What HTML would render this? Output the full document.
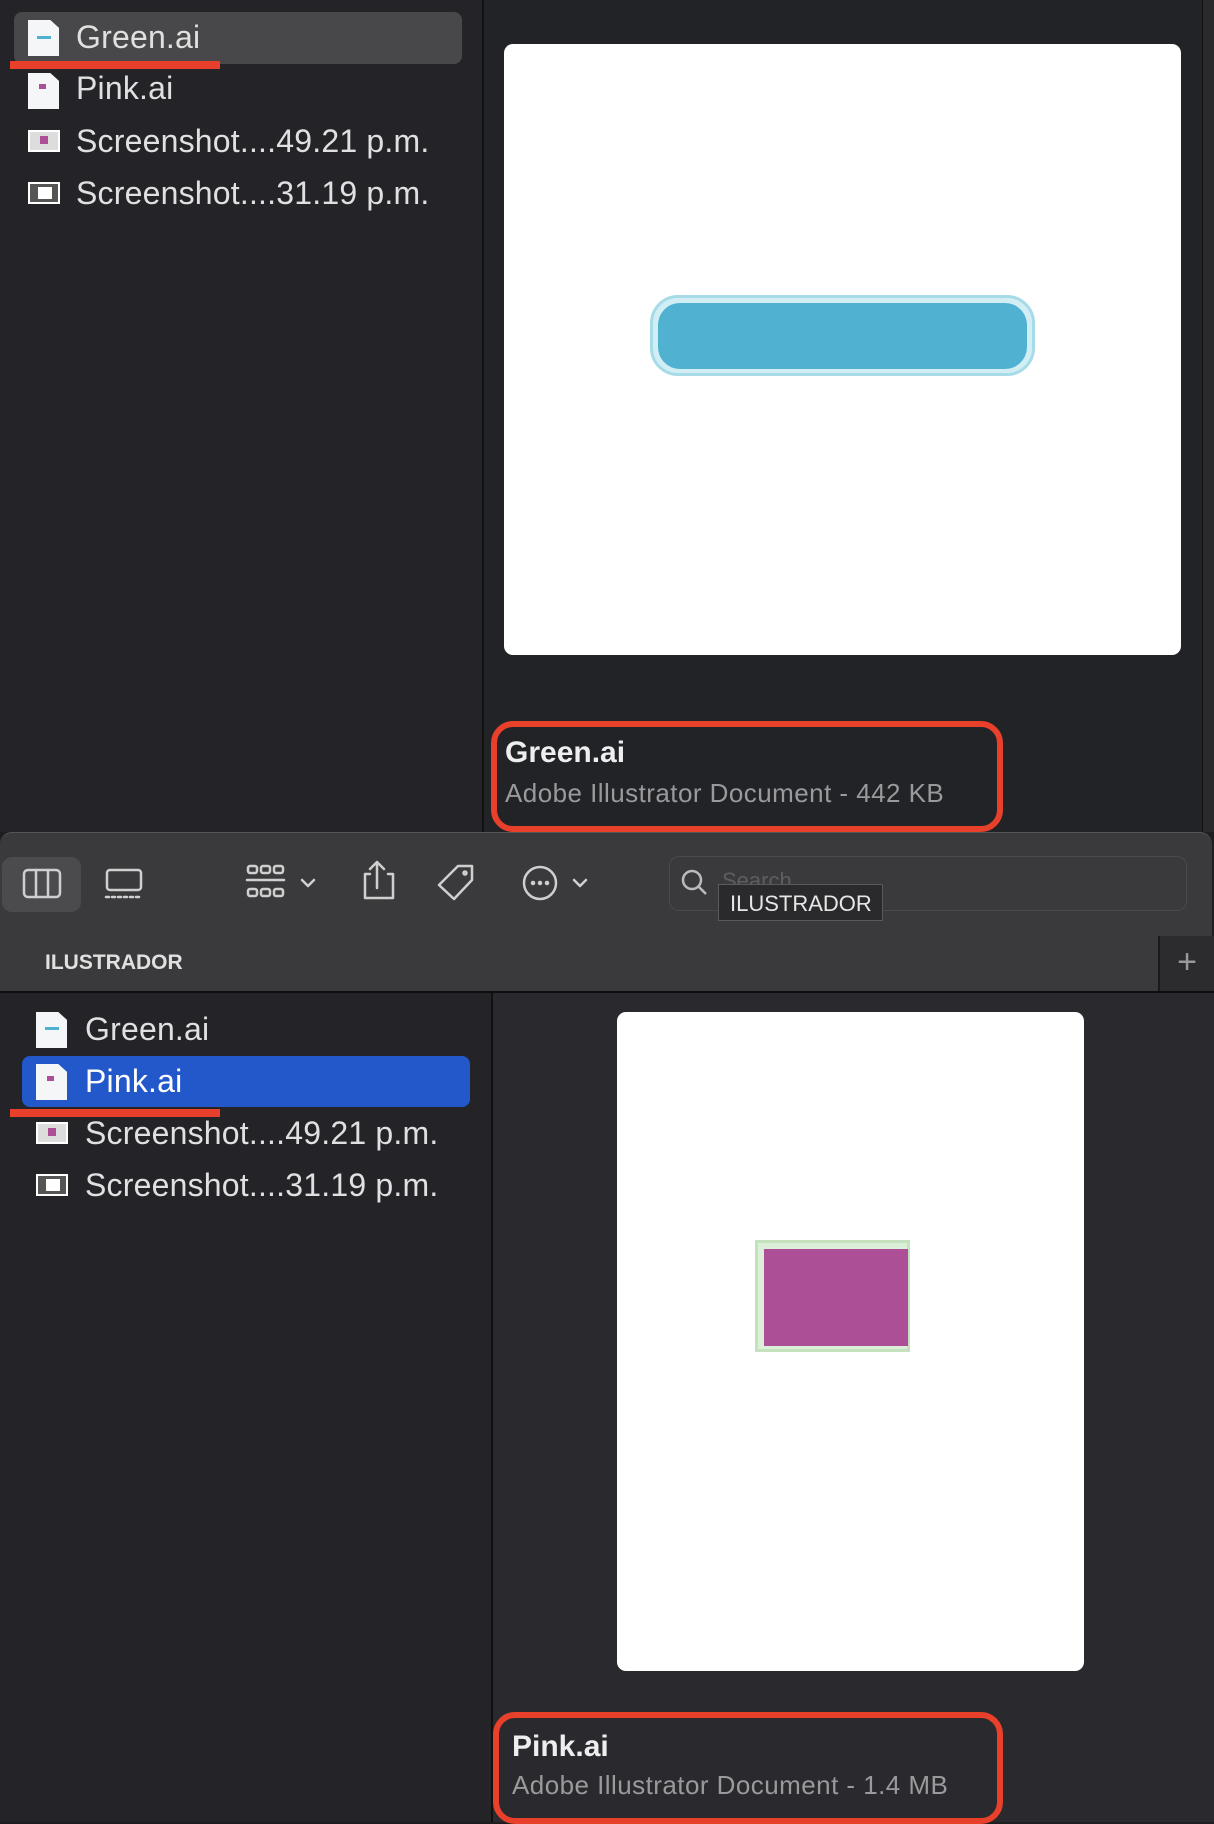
<!DOCTYPE html>
<html><head><meta charset="utf-8"><style>
*{margin:0;padding:0;box-sizing:border-box}
body{width:1214px;height:1822px;background:#1e1e20;font-family:"Liberation Sans",sans-serif;position:relative;overflow:hidden;color:#e2e2e2}
.abs{position:absolute}
.row{position:absolute;height:50px;display:flex;align-items:center;font-size:32px;color:#e0e0e0;white-space:nowrap;letter-spacing:0.2px}
.fi{position:absolute;width:31px;height:36px;background:#f4f6f8;clip-path:polygon(0 0,72% 0,100% 22%,100% 100%,0 100%)}
.ss{position:absolute;width:32px;height:22px;background:#fff;border:2px solid #fff}
.red{position:absolute;border:6px solid #e8402a;border-radius:22px}
.t{font-size:30px;font-weight:bold;color:#eee}
.s{font-size:26px;color:#9a9a9c;letter-spacing:0.45px}
</style></head><body>
<div class="abs" style="left:0;top:0;width:482px;height:832px;background:#232328"></div>
<div class="abs" style="left:482px;top:0;width:2px;height:832px;background:#111"></div>
<div class="abs" style="left:484px;top:0;width:718px;height:832px;background:#222327"></div>
<div class="abs" style="left:1202px;top:0;width:12px;height:832px;background:#2a2a2c;border-left:1px solid #111"></div>
<div class="abs" style="left:14px;top:12px;width:448px;height:52px;background:#48484a;border-radius:8px"></div>
<div class="abs" style="left:10px;top:61px;width:210px;height:8px;background:#e8402a"></div>
<div class="fi" style="left:28px;top:20px"></div><div class="abs" style="left:37px;top:36px;width:14px;height:3px;background:#4fb1d1"></div>
<div class="fi" style="left:28px;top:73px"></div><div class="abs" style="left:39px;top:84px;width:7px;height:5px;background:#ad4f96"></div>
<div class="ss" style="left:28px;top:130px;background:#ddd"><div class="abs" style="left:10px;top:4px;width:8px;height:8px;background:#ad4f96"></div></div>
<div class="ss" style="left:28px;top:182px;background:#555"><div class="abs" style="left:8px;top:3px;width:14px;height:12px;background:#fff"></div></div>
<div class="row" style="left:76px;top:12px">Green.ai</div>
<div class="row" style="left:76px;top:63px">Pink.ai</div>
<div class="row" style="left:76px;top:116px">Screenshot....49.21 p.m.</div>
<div class="row" style="left:76px;top:168px">Screenshot....31.19 p.m.</div>
<div class="abs" style="left:504px;top:44px;width:677px;height:611px;background:#fff;border-radius:9px"></div>
<div class="abs" style="left:650px;top:295px;width:385px;height:81px;background:#d2eef5;border-radius:28px;border:3px solid #a7dbe8"></div>
<div class="abs" style="left:658px;top:303px;width:369px;height:66px;background:#50b1d1;border-radius:22px"></div>
<div class="red" style="left:491px;top:721px;width:512px;height:111px"></div>
<div class="abs t" style="left:505px;top:736px">Green.ai</div>
<div class="abs s" style="left:505px;top:778px">Adobe Illustrator Document - 442 KB</div>
<div class="abs" style="left:0;top:832px;width:1212px;height:160px;background:#3a3a3c;border-radius:12px 12px 0 0;border-top:1px solid #555"></div>
<div class="abs" style="left:2px;top:857px;width:79px;height:55px;background:#4b4b4d;border-radius:10px"></div>
<svg class="abs" style="left:0;top:840px" width="620" height="90" viewBox="0 840 620 90" fill="none" stroke="#cfcfcf" stroke-width="2.5" stroke-linecap="round" stroke-linejoin="round">
<rect x="24" y="870" width="36" height="27" rx="4"/><line x1="36" y1="870" x2="36" y2="897"/><line x1="48" y1="870" x2="48" y2="897"/>
<rect x="107" y="870" width="34" height="20" rx="3"/><path d="M106 897h36" stroke-dasharray="3 3"/>
<rect x="248" y="866" width="9" height="7" rx="2"/><rect x="261" y="866" width="9" height="7" rx="2"/><rect x="274" y="866" width="9" height="7" rx="2"/>
<rect x="248" y="889" width="9" height="7" rx="2"/><rect x="261" y="889" width="9" height="7" rx="2"/><rect x="274" y="889" width="9" height="7" rx="2"/>
<line x1="247" y1="880" x2="284" y2="880"/><path d="M302 880l6 6 6-6"/>
<path d="M370 874h-5v24h28v-24h-5M377 888v-25M370 869l7-7 7 7"/>
<path d="M458 866h14v14l-18 19-15-14z"/><circle cx="465" cy="873" r="1.5"/>
<circle cx="540" cy="883" r="16"/><circle cx="533" cy="883" r="1" fill="#cfcfcf"/><circle cx="540" cy="883" r="1" fill="#cfcfcf"/><circle cx="547" cy="883" r="1" fill="#cfcfcf"/>
<path d="M574 880l6 6 6-6"/>
</svg>
<div class="abs" style="left:669px;top:856px;width:518px;height:55px;border:1px solid #4a4a4c;border-radius:10px;background:#3a3a3c"></div>
<svg class="abs" style="left:680px;top:868px" width="30" height="30" fill="none" stroke="#bbb" stroke-width="2.5"><circle cx="12" cy="12" r="9"/><path d="M19 19l7 7"/></svg>
<div class="abs" style="left:722px;top:868px;font-size:22px;color:#5e5e60">Search</div>
<div class="abs" style="left:718px;top:884px;width:165px;height:37px;background:#2a2a2c;border:1px solid #5a5a5c;font-size:22px;color:#e6e6e6;padding:6px 0 0 11px">ILUSTRADOR</div>
<div class="abs" style="left:45px;top:951px;font-size:21px;font-weight:bold;color:#e0e0e0">ILUSTRADOR</div>
<div class="abs" style="left:1158px;top:936px;width:56px;height:56px;background:#2c2c2e;border-left:2px solid #1a1a1a;color:#999;font-size:34px;text-align:center;line-height:52px">+</div>
<div class="abs" style="left:0;top:991px;width:1214px;height:2px;background:#0e0e0e"></div>
<div class="abs" style="left:0;top:993px;width:491px;height:829px;background:#232328"></div>
<div class="abs" style="left:491px;top:993px;width:2px;height:829px;background:#111"></div>
<div class="abs" style="left:493px;top:993px;width:721px;height:829px;background:#2a2a2e"></div>
<div class="abs" style="left:22px;top:1056px;width:448px;height:51px;background:#2358cb;border-radius:8px"></div>
<div class="abs" style="left:10px;top:1109px;width:210px;height:8px;background:#e8402a"></div>
<div class="fi" style="left:36px;top:1012px"></div><div class="abs" style="left:45px;top:1027px;width:14px;height:3px;background:#4fb1d1"></div>
<div class="fi" style="left:36px;top:1064px"></div><div class="abs" style="left:47px;top:1076px;width:7px;height:5px;background:#ad4f96"></div>
<div class="ss" style="left:36px;top:1122px;background:#ddd"><div class="abs" style="left:10px;top:4px;width:8px;height:8px;background:#ad4f96"></div></div>
<div class="ss" style="left:36px;top:1174px;background:#555"><div class="abs" style="left:8px;top:3px;width:14px;height:12px;background:#fff"></div></div>
<div class="row" style="left:85px;top:1004px">Green.ai</div>
<div class="row" style="left:85px;top:1056px;color:#fff">Pink.ai</div>
<div class="row" style="left:85px;top:1108px">Screenshot....49.21 p.m.</div>
<div class="row" style="left:85px;top:1160px">Screenshot....31.19 p.m.</div>
<div class="abs" style="left:617px;top:1012px;width:467px;height:659px;background:#fff;border-radius:9px"></div>
<div class="abs" style="left:755px;top:1240px;width:155px;height:112px;background:#dcefd8;border:3px solid #c3e2bd"></div>
<div class="abs" style="left:764px;top:1249px;width:144px;height:97px;background:#ad4f96"></div>
<div class="red" style="left:493px;top:1712px;width:510px;height:112px"></div>
<div class="abs t" style="left:512px;top:1730px">Pink.ai</div>
<div class="abs s" style="left:512px;top:1770px">Adobe Illustrator Document - 1.4 MB</div>
</body></html>
